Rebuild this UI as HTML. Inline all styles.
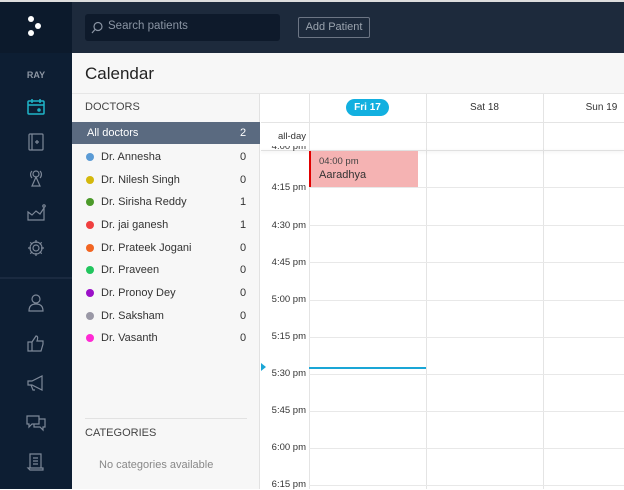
<!DOCTYPE html>
<html><head><style>
*{margin:0;padding:0;box-sizing:border-box}
body{width:624px;height:489px;overflow:hidden;font-family:"Liberation Sans",sans-serif;background:#fff;position:relative}
.abs{position:absolute}
.side{left:0;top:0;width:72px;height:489px;background:#0d1e33}
.logo{left:0;top:0;width:72px;height:53px;background:#0c1a2c}
.top{left:72px;top:0;width:552px;height:53px;background:#1d2a3c}
.search{left:85px;top:14px;width:195px;height:27px;background:#0e1a2b;border-radius:3px;color:#8a94a3;font-size:11.5px;padding:6px 0 0 23px}
.btn{left:298px;top:17px;width:72px;height:21px;border:1px solid #6c7584;border-radius:2px;color:#9aa3ae;font-size:11px;text-align:center;line-height:19px}
.hdr{left:72px;top:53px;width:552px;height:41px;background:#f7f7f7;border-bottom:1px solid #e6e6e6}
.doc{left:72px;top:94px;width:188px;height:395px;background:#f7f7f7;border-right:1px solid #e2e2e2}
.row{position:absolute;left:0;width:188px;height:22px;font-size:11px;color:#333;line-height:24px}
.dot{position:absolute;left:14px;top:8px;width:8px;height:8px;border-radius:50%}
.nm{position:absolute;left:29px}
.ct{position:absolute;left:168px}
.ico{position:absolute;left:26px;width:20px;height:20px}
.vl{position:absolute;top:94px;width:1px;height:395px;background:#e4e4e4}
.hl{position:absolute;left:309px;width:315px;height:1px;background:#e8e8e8}
.tl{position:absolute;left:262px;width:44px;text-align:right;font-size:9.5px;color:#333}
</style></head><body>
<div class="abs" style="left:0;top:0;width:624px;height:2px;background:#ddd;z-index:5"></div>
<div class="abs side"></div>
<div class="abs logo">
<div class="abs" style="left:28px;top:16px;width:6px;height:6px;border-radius:50%;background:#fff"></div>
<div class="abs" style="left:35px;top:23px;width:6px;height:6px;border-radius:50%;background:#fff"></div>
<div class="abs" style="left:28px;top:30px;width:6px;height:6px;border-radius:50%;background:#fff"></div>
</div>
<div class="abs" style="left:0;top:277px;width:72px;height:2px;background:#1a2a40"></div>
<div class="abs" style="left:0;top:70px;width:72px;text-align:center;font-size:9px;color:#8d96a3;font-weight:bold">RAY</div>
<svg class="ico" style="top:97px" viewBox="0 0 20 20" fill="none" stroke="#1fb5c9" stroke-width="1.5"><rect x="2" y="4" width="16" height="13" rx="1"/><path d="M2 8h16M6 2v4M14 2v4"/><circle cx="13" cy="13" r="1"/></svg>
<svg class="ico" style="top:132px" viewBox="0 0 20 20" fill="none" stroke="#7d8898" stroke-width="1.2"><rect x="3" y="2" width="14" height="16" rx="1"/><path d="M6 2v16M11 8v4M9 10h4"/></svg>
<svg class="ico" style="top:168px" viewBox="0 0 20 20" fill="none" stroke="#7d8898" stroke-width="1.2"><circle cx="10" cy="6" r="3"/><path d="M6 3a5 5 0 0 0 0 7M14 3a5 5 0 0 1 0 7M10 9l-4 9h8z"/></svg>
<svg class="ico" style="top:202px" viewBox="0 0 20 20" fill="none" stroke="#7d8898" stroke-width="1.2"><path d="M2 10v8h16V6l-4 6-4-3-4 4z"/><circle cx="18" cy="4" r="1.2"/></svg>
<svg class="ico" style="top:238px" viewBox="0 0 20 20" fill="none" stroke="#7d8898" stroke-width="1.2"><circle cx="10" cy="10" r="3"/><path d="M10 2v3M10 15v3M2 10h3M15 10h3M4.3 4.3l2 2M13.7 13.7l2 2M4.3 15.7l2-2M13.7 6.3l2-2"/><circle cx="10" cy="10" r="6"/></svg>
<svg class="ico" style="top:293px" viewBox="0 0 20 20" fill="none" stroke="#7d8898" stroke-width="1.2"><circle cx="10" cy="6" r="4"/><path d="M3 18c0-5 3-7 7-7s7 2 7 7z"/></svg>
<svg class="ico" style="top:333px" viewBox="0 0 20 20" fill="none" stroke="#7d8898" stroke-width="1.2"><path d="M2 9h4v9H2zM6 9l4-6c2 0 2 2 1 5h6v3l-2 7H6"/></svg>
<svg class="ico" style="top:373px" viewBox="0 0 20 20" fill="none" stroke="#7d8898" stroke-width="1.2"><path d="M2 8h4l10-5v14L6 12H2zM5 12l2 5h2"/></svg>
<svg class="ico" style="top:413px" viewBox="0 0 20 20" fill="none" stroke="#7d8898" stroke-width="1.2"><path d="M1 3h12v8H6l-3 3v-3H1zM8 11v3h6l3 3v-3h2V6h-6"/></svg>
<svg class="ico" style="top:452px" viewBox="0 0 20 20" fill="none" stroke="#7d8898" stroke-width="1.2"><path d="M4 2h11v14H4zM7 6h5M7 9h5M7 12h5M2 16h15v2H4z"/></svg>

<div class="abs top"></div>
<div class="abs search">Search patients</div>
<svg class="abs" style="left:91px;top:21px" width="13" height="13" viewBox="0 0 13 13" fill="none" stroke="#8a94a3" stroke-width="1.2"><circle cx="7" cy="5.5" r="4"/><path d="M4 8.5L1 12"/></svg>
<div class="abs btn">Add Patient</div>

<div class="abs hdr"><div style="position:absolute;left:13px;top:11px;font-size:17px;color:#222">Calendar</div></div>

<div class="abs doc">
<div style="position:absolute;left:13px;top:7px;font-size:11px;color:#444">DOCTORS</div>
<div class="row" style="top:28px;background:#5a6a80;color:#fff;height:22px;line-height:22px"><span class="nm" style="left:15px">All doctors</span><span class="ct">2</span></div>
<div class="row" style="top:51px"><span class="dot" style="background:#5b9bd5"></span><span class="nm">Dr. Annesha</span><span class="ct">0</span></div>
<div class="row" style="top:74px"><span class="dot" style="background:#d4b80c"></span><span class="nm">Dr. Nilesh Singh</span><span class="ct">0</span></div>
<div class="row" style="top:96px"><span class="dot" style="background:#4c9a2a"></span><span class="nm">Dr. Sirisha Reddy</span><span class="ct">1</span></div>
<div class="row" style="top:119px"><span class="dot" style="background:#f04040"></span><span class="nm">Dr. jai ganesh</span><span class="ct">1</span></div>
<div class="row" style="top:142px"><span class="dot" style="background:#f26522"></span><span class="nm">Dr. Prateek Jogani</span><span class="ct">0</span></div>
<div class="row" style="top:164px"><span class="dot" style="background:#22c55e"></span><span class="nm">Dr. Praveen</span><span class="ct">0</span></div>
<div class="row" style="top:187px"><span class="dot" style="background:#9b10c8"></span><span class="nm">Dr. Pronoy Dey</span><span class="ct">0</span></div>
<div class="row" style="top:210px"><span class="dot" style="background:#9a98a6"></span><span class="nm">Dr. Saksham</span><span class="ct">0</span></div>
<div class="row" style="top:232px"><span class="dot" style="background:#ff2ad4"></span><span class="nm">Dr. Vasanth</span><span class="ct">0</span></div>
<div style="position:absolute;left:13px;top:324px;width:162px;height:1px;background:#e2e2e2"></div>
<div style="position:absolute;left:13px;top:333px;font-size:11px;color:#444">CATEGORIES</div>
<div style="position:absolute;left:27px;top:365px;font-size:11px;color:#888">No categories available</div>
</div>

<div class="vl" style="left:309px"></div><div class="vl" style="left:426px"></div><div class="vl" style="left:543px"></div>
<div class="abs" style="left:261px;top:122px;width:363px;height:1px;background:#e4e4e4"></div>
<div class="abs" style="left:261px;top:150px;width:363px;height:1px;background:#e0e0e0;box-shadow:0 1px 3px rgba(0,0,0,.12)"></div>
<div class="abs" style="left:346px;top:99px;width:43px;height:17px;border-radius:9px;background:#12b0e0;color:#fff;font-size:10px;font-weight:bold;text-align:center;line-height:17px">Fri 17</div>
<div class="abs" style="left:426px;top:102px;width:117px;text-align:center;font-size:10px;color:#333">Sat 18</div>
<div class="abs" style="left:543px;top:102px;width:117px;text-align:center;font-size:10px;color:#333">Sun 19</div>
<div class="tl" style="top:131px">all-day</div>

<div class="hl" style="top:187px"></div><div class="hl" style="top:225px"></div><div class="hl" style="top:262px"></div><div class="hl" style="top:300px"></div><div class="hl" style="top:337px"></div><div class="hl" style="top:374px"></div><div class="hl" style="top:411px"></div><div class="hl" style="top:448px"></div><div class="hl" style="top:485px"></div>
<div class="tl" style="top:146px;height:6px;overflow:hidden"><span style="position:relative;top:-5px">4:00 pm</span></div>
<div class="tl" style="top:182px">4:15 pm</div>
<div class="tl" style="top:220px">4:30 pm</div>
<div class="tl" style="top:257px">4:45 pm</div>
<div class="tl" style="top:294px">5:00 pm</div>
<div class="tl" style="top:331px">5:15 pm</div>
<div class="tl" style="top:368px">5:30 pm</div>
<div class="tl" style="top:405px">5:45 pm</div>
<div class="tl" style="top:442px">6:00 pm</div>
<div class="tl" style="top:479px">6:15 pm</div>

<div class="abs" style="left:309px;top:151px;width:109px;height:36px;background:#f5b3b3;border-left:2px solid #e00000">
<div style="position:absolute;left:8px;top:5px;font-size:9.5px;color:#444">04:00 pm</div>
<div style="position:absolute;left:8px;top:18px;font-size:11px;color:#333">Aaradhya</div>
</div>
<div class="abs" style="left:309px;top:367px;width:117px;height:2px;background:#1aa6d6"></div>
<div class="abs" style="left:261px;top:363px;width:0;height:0;border-top:4px solid transparent;border-bottom:4px solid transparent;border-left:5px solid #1aa6d6"></div>
</body></html>
